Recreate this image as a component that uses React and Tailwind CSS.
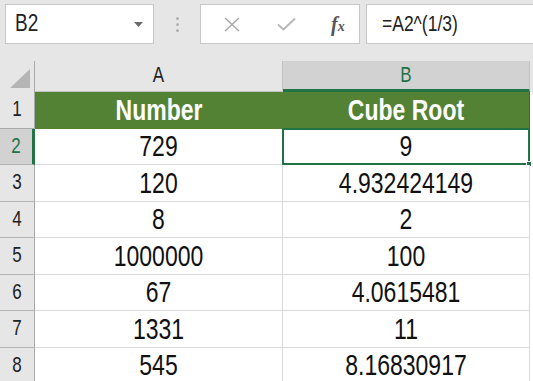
import React from "react";

const rows = [
  ["729", "9"],
  ["120", "4.932424149"],
  ["8", "2"],
  ["1000000", "100"],
  ["67", "4.0615481"],
  ["1331", "11"],
  ["545", "8.16830917"],
];

// stretched text, the screenshot is squeezed horizontally
const Txt = ({ children, className = "" }) => (
  <span className={`inline-block scale-y-[1.25] ${className}`}>{children}</span>
);

const App = () => {
  return (
    <div
      className="w-[533px] h-[381px] overflow-hidden bg-[#e6e6e6]"
      style={{ fontFamily: '"Liberation Sans", Arial, sans-serif' }}
    >
      {/* formula bar */}
      <div className="flex items-start pt-[4px] h-[61px]">
        <div className="ml-[5px] w-[149px] h-[40px] bg-white border border-[#c8c8c8] flex items-center justify-between pl-[9px] pr-[10px]">
          <Txt className="text-[19px] text-[#222] scale-y-[1.15]">B2</Txt>
          <svg width="9" height="5" viewBox="0 0 9 5">
            <path d="M0 0 L9 0 L4.5 5 Z" fill="#6b6b6b" />
          </svg>
        </div>
        <div className="w-[46px] h-[40px] flex flex-col items-center justify-center gap-[3px]">
          <span className="w-[3px] h-[3px] rounded-full bg-[#b0b0b0]" />
          <span className="w-[3px] h-[3px] rounded-full bg-[#b0b0b0]" />
          <span className="w-[3px] h-[3px] rounded-full bg-[#b0b0b0]" />
        </div>
        <div className="w-[160px] h-[40px] bg-white border border-[#c8c8c8] flex items-center">
          <svg className="ml-[23px]" width="16" height="15" viewBox="0 0 16 15">
            <path d="M1 1 L15 14 M15 1 L1 14" stroke="#a8a8a8" strokeWidth="1.5" fill="none" />
          </svg>
          <svg className="ml-[37px]" width="19" height="14" viewBox="0 0 19 14">
            <path d="M1 7.5 L6.5 12.5 L18 1.5" stroke="#b8b8b8" strokeWidth="2" fill="none" />
          </svg>
          <span
            className="ml-[35px] text-[20px] italic font-bold text-[#555] leading-none"
            style={{ fontFamily: '"Liberation Serif", "Times New Roman", serif' }}
          >
            f<span className="text-[14px]">x</span>
          </span>
        </div>
        <div className="ml-[6px] flex-1 h-[40px] bg-white border border-r-0 border-[#c8c8c8] flex items-center pl-[15px]">
          <Txt className="text-[17.5px] text-[#222] scale-y-[1.15]">=A2^(1/3)</Txt>
        </div>
      </div>

      {/* sheet */}
      <div className="grid grid-cols-[35px_248px_247px_1fr] grid-rows-[31px_repeat(8,36.5px)]">
        {/* column headers */}
        <div className="relative border-r border-[#a9a9a9]">
          <svg className="absolute right-[4px] bottom-[4px]" width="20" height="19" viewBox="0 0 20 19">
            <path d="M20 0 L20 19 L0 19 Z" fill="#b5b5b5" />
          </svg>
        </div>
        <div className="border-r border-b border-[#c4c4c4] flex items-center justify-center">
          <Txt className="text-[17px] text-[#222]">A</Txt>
        </div>
        <div className="bg-[#d2d2d2] border-b-[3px] border-[#217346] border-r border-r-[#c4c4c4] flex items-center justify-center pt-[2px]">
          <Txt className="text-[17px] text-[#217346]">B</Txt>
        </div>
        <div className="bg-[#e6e6e6]" />

        {/* row 1: headers */}
        <div className="border-r border-b border-[#a9a9a9] flex items-center justify-center">
          <Txt className="text-[17px] text-[#222]">1</Txt>
        </div>
        <div className="bg-[#548235] flex items-center justify-center">
          <Txt className="text-[23px] font-bold text-white">Number</Txt>
        </div>
        <div className="bg-[#548235] border-r border-[#217346] flex items-center justify-center">
          <Txt className="text-[23px] font-bold text-white">Cube Root</Txt>
        </div>
        <div className="bg-white" />

        {rows.map(([a, b], i) => {
          const n = i + 2;
          const sel = n === 2;
          return (
            <React.Fragment key={n}>
              <div
                className={`border-b border-[#b4b4b4] flex items-center justify-center ${
                  sel ? "bg-[#d2d2d2] border-r-[3px] border-r-[#217346]" : "border-r border-r-[#a9a9a9]"
                }`}
              >
                <Txt className={`text-[17px] ${sel ? "text-[#217346]" : "text-[#222]"}`}>{n}</Txt>
              </div>
              <div className="bg-white border-r border-b border-[#d9d9d9] flex items-center justify-center">
                <Txt className="text-[23px] text-[#111]">{a}</Txt>
              </div>
              <div className="relative bg-white border-r border-b border-[#d9d9d9] flex items-center justify-center">
                <Txt className="text-[23px] text-[#111]">{b}</Txt>
                {sel && (
                  <>
                    <div className="absolute -left-[1px] -top-[1px] -right-[1px] -bottom-[1px] border-2 border-[#217346]" />
                    <div className="absolute -right-[3px] -bottom-[3px] w-[6px] h-[6px] bg-[#217346] border border-white" />
                  </>
                )}
              </div>
              <div className="bg-white" />
            </React.Fragment>
          );
        })}
      </div>
    </div>
  );
};

export default App;
